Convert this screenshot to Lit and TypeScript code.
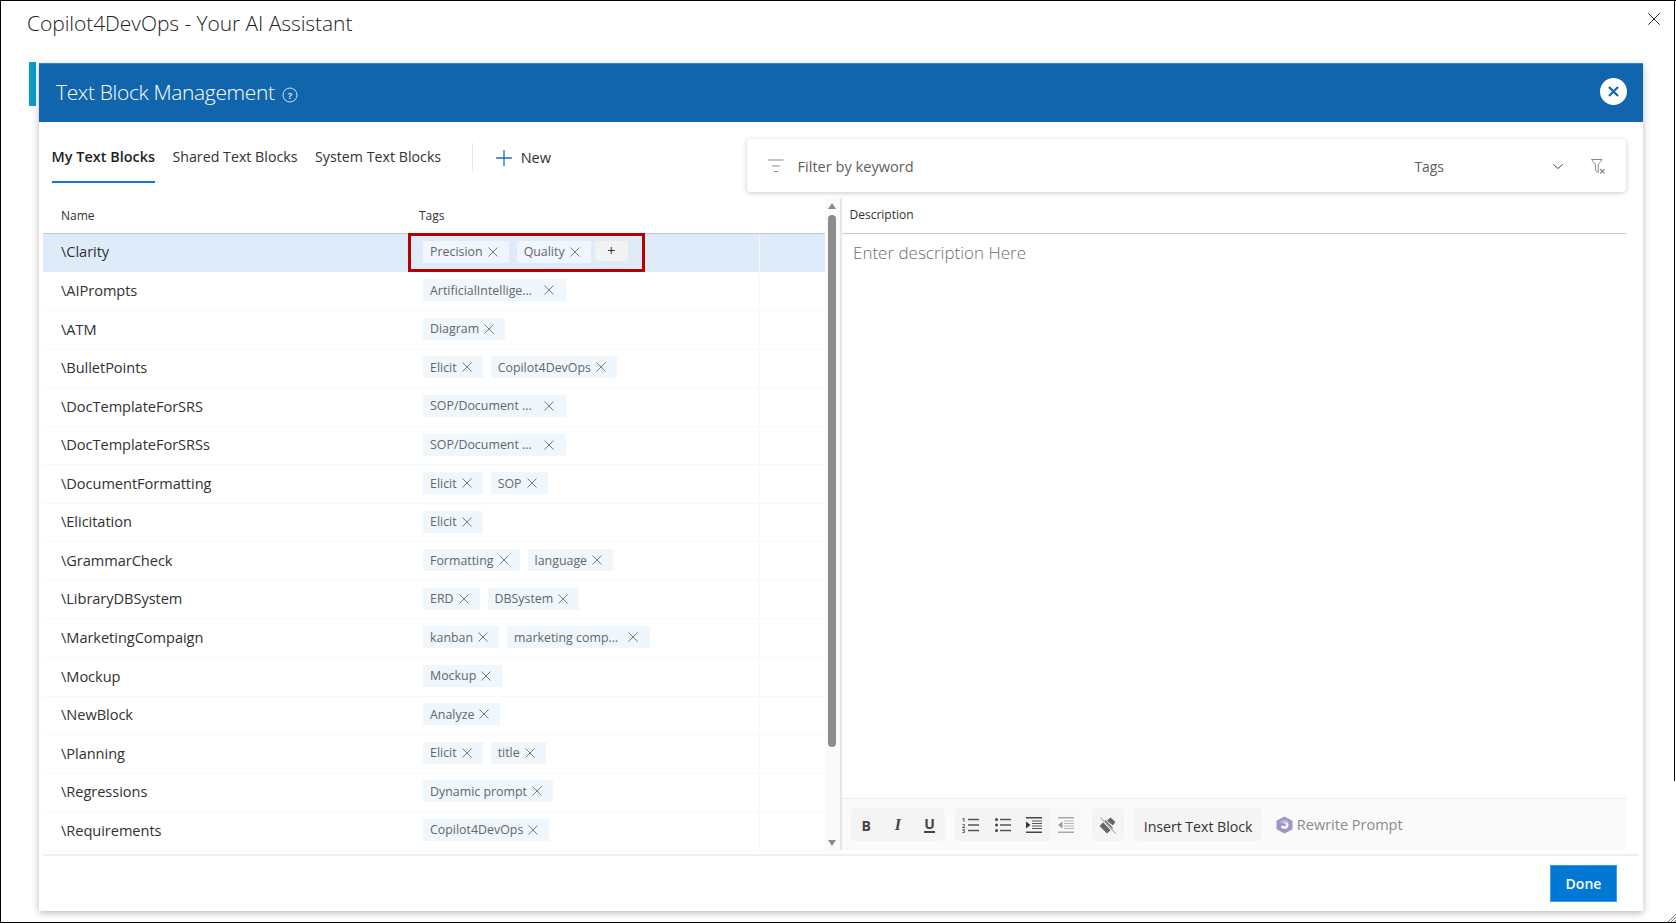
import { LitElement, html, css, nothing } from 'lit';
import { customElement } from 'lit/decorators.js';

interface Tag {
  label: string;
  cut?: boolean;
}

interface Block {
  name: string;
  tags: Tag[];
}

const t = (label: string, cut = false): Tag => ({ label, cut });

const BLOCKS: Block[] = [
  { name: '\\Clarity', tags: [t('Precision'), t('Quality')] },
  { name: '\\AIPrompts', tags: [t('ArtificialIntellige...', true)] },
  { name: '\\ATM', tags: [t('Diagram')] },
  { name: '\\BulletPoints', tags: [t('Elicit'), t('Copilot4DevOps')] },
  { name: '\\DocTemplateForSRS', tags: [t('SOP/Document ...', true)] },
  { name: '\\DocTemplateForSRSs', tags: [t('SOP/Document ...', true)] },
  { name: '\\DocumentFormatting', tags: [t('Elicit'), t('SOP')] },
  { name: '\\Elicitation', tags: [t('Elicit')] },
  { name: '\\GrammarCheck', tags: [t('Formatting'), t('language')] },
  { name: '\\LibraryDBSystem', tags: [t('ERD'), t('DBSystem')] },
  { name: '\\MarketingCompaign', tags: [t('kanban'), t('marketing comp...', true)] },
  { name: '\\Mockup', tags: [t('Mockup')] },
  { name: '\\NewBlock', tags: [t('Analyze')] },
  { name: '\\Planning', tags: [t('Elicit'), t('title')] },
  { name: '\\Regressions', tags: [t('Dynamic prompt')] },
  { name: '\\Requirements', tags: [t('Copilot4DevOps')] },
];

const crossIcon = html`<svg class="x" width="10" height="10" viewBox="0 0 10 10"><path d="M.5.5l9 9M9.5.5l-9 9" stroke="#7a7a7a" fill="none"/></svg>`;

@customElement('app-root')
export class AppRoot extends LitElement {
  static override styles = css`
    :host {
      display: block;
      width: 1676px;
      height: 923px;
      font-family: 'Open Sans', 'Noto Sans', sans-serif;
      color: #323130;
    }

    * {
      box-sizing: border-box;
    }

    .frame {
      position: relative;
      height: 923px;
      background: #fff;
      border-top: 1px solid #000;
      border-left: 1px solid #000;
      border-bottom: 1px solid #000;
      overflow: hidden;
    }

    .frame::after {
      content: '';
      position: absolute;
      top: 0;
      left: 1673px;
      width: 1px;
      height: 780px;
      background: #000;
    }

    .titlebar {
      height: 62px;
      padding: 7px 16px 0 26px;
      display: flex;
      justify-content: space-between;
      align-items: flex-start;
    }

    .app-title {
      font-size: 21px;
      font-weight: 300;
      line-height: 30px;
      letter-spacing: -0.07px;
      color: #222;
    }

    .app-close {
      margin-top: 5px;
    }

    .stage {
      position: relative;
      margin-left: 37.5px;
      width: 1604.5px;
      height: 848px;
    }

    .strip {
      position: absolute;
      left: -10px;
      top: -1px;
      width: 7.5px;
      height: 44px;
      background: #0a9bc9;
    }

    .modal {
      position: relative;
      height: 100%;
      display: flex;
      flex-direction: column;
      background: #fff;
      box-shadow: 0 2px 7px rgba(0, 0, 0, 0.28);
    }

    .head {
      flex: 0 0 59px;
      background: #1165ac;
      border-top: 1px solid #3d83bd;
      padding: 0 16px 0 17.5px;
      display: flex;
      align-items: center;
      color: #fff;
    }

    .head-title {
      font-size: 21px;
      font-weight: 300;
      letter-spacing: -0.35px;
      line-height: 30px;
      margin-top: -3px;
    }

    .help {
      margin-left: 7px;
      margin-top: 3px;
    }

    .head-close {
      margin-left: auto;
      width: 27px;
      height: 27px;
      border-radius: 50%;
      background: #fff;
      display: flex;
      align-items: center;
      justify-content: center;
      margin-top: -3px;
    }

    .top {
      flex: 0 0 76px;
      display: flex;
      justify-content: space-between;
      padding: 16px 17.5px 0 13px;
    }

    .tabs {
      display: flex;
      align-items: flex-start;
    }

    .tab {
      height: 45px;
      margin-right: 17.5px;
      padding-top: 8px;
      font-size: 14.2px;
      line-height: 22px;
      letter-spacing: 0.02px;
      color: #323130;
    }

    .tab.active {
      font-weight: 600;
      font-size: 14.4px;
      letter-spacing: 0.02px;
      color: #1f1f1f;
      border-bottom: 2px solid #0f78d4;
    }

    .sep {
      width: 1px;
      height: 28px;
      margin: 5px 0 0 13px;
      background: #e6e6e6;
    }

    .new {
      display: flex;
      align-items: center;
      height: 22px;
      margin: 8px 0 0 23px;
      font-size: 14.5px;
    }

    .new svg {
      margin-right: 9px;
      margin-top: 1px;
    }

    .filter {
      width: 879px;
      height: 53px;
      margin-top: 1px;
      background: #fff;
      border-radius: 4px;
      box-shadow: 0 1px 5px rgba(0, 0, 0, 0.22);
      display: flex;
      align-items: center;
      padding: 1px 20px 0 21px;
      font-size: 14.6px;
      color: #605e5c;
    }

    .filter-text {
      margin-left: 14px;
    }

    .filter-tags {
      margin-left: auto;
      width: 138px;
      font-size: 14px;
      letter-spacing: -0.1px;
    }

    .filter .clear {
      margin-left: 28px;
    }

    .panes {
      flex: 1;
      min-height: 0;
      display: flex;
      padding: 0 17.5px 0 4.5px;
    }

    .list {
      flex: 0 0 782px;
      overflow: hidden;
    }

    .list-head {
      height: 36px;
      display: grid;
      grid-template-columns: 365px 1fr;
      align-items: center;
      font-size: 12px;
      color: #323130;
      border-bottom: 1px solid #c8c8c8;
    }

    .list-head span:first-child {
      padding-left: 18px;
    }

    .list-head span:last-child {
      padding-left: 11px;
    }

    .row {
      position: relative;
      height: 38.55px;
      display: grid;
      grid-template-columns: 365px 351px 1fr;
      align-items: center;
      border-bottom: 1px solid #f8f8f8;
    }

    .row.selected {
      height: 37.55px;
      margin-bottom: 1px;
      background: #deebf8;
      border-bottom-color: transparent;
    }

    .name {
      margin-bottom: 2.5px;
      padding-left: 18px;
      font-size: 14.6px;
      letter-spacing: -0.05px;
      color: #323130;
    }

    .cell {
      display: flex;
      gap: 8px;
      margin-bottom: 2px;
      padding-left: 15px;
      align-items: flex-start;
    }

    .selected .cell {
      margin-bottom: 1px;
    }

    .chip {
      height: 22px;
      display: flex;
      align-items: center;
      gap: 5px;
      padding: 0 11px 0 7px;
      background: #eff6fc;
      font-size: 12.4px;
      color: #666;
      white-space: nowrap;
    }

    .chip.cut {
      width: 142.7px;
      padding-right: 12px;
      justify-content: space-between;
    }

    .add {
      width: 33px;
      height: 20px;
      margin-left: -4px;
      border-radius: 3px;
      background: #f2f2f2;
      display: flex;
      align-items: center;
      justify-content: center;
      font-size: 14px;
      color: #333;
    }

    .marker {
      position: absolute;
      left: 365px;
      top: -1px;
      width: 237px;
      height: 39px;
      border: 3px solid #b80000;
      pointer-events: none;
    }

    .cell-end {
      align-self: stretch;
      border-left: 1px solid #f8f8f8;
    }

    .scroll {
      flex: 0 0 14.5px;
      background: #fafafa;
      display: flex;
      flex-direction: column;
      align-items: center;
    }

    .arrow-up {
      margin-top: 5px;
      width: 0;
      height: 0;
      border-left: 4px solid transparent;
      border-right: 4px solid transparent;
      border-bottom: 6px solid #8c8c8c;
    }

    .thumb {
      margin-top: 6px;
      width: 8px;
      height: 532px;
      border-radius: 4px;
      background: #8c8c8c;
    }

    .arrow-down {
      margin-top: 93px;
      width: 0;
      height: 0;
      border-left: 4px solid transparent;
      border-right: 4px solid transparent;
      border-top: 6px solid #8c8c8c;
    }

    .detail {
      flex: 1;
      min-width: 0;
      border-left: 2px solid #e6e6e6;
      display: flex;
      flex-direction: column;
      height: 652px;
    }

    .detail-head {
      flex: 0 0 36px;
      padding: 8px 0 0 8px;
      font-size: 12px;
      line-height: 18px;
      border-bottom: 1px solid #c8c8c8;
    }

    .editor {
      flex: 1;
      padding: 7px 0 0 11.5px;
      font-size: 17px;
      font-weight: 300;
      line-height: 24px;
      color: #6e6e6e;
    }

    .toolbar {
      flex: 0 0 52px;
      background: #fafafa;
      border-top: 1px solid #eee;
      display: flex;
      align-items: center;
      gap: 10px;
      padding: 0 0 0 9px;
    }

    .group {
      height: 33px;
      border-radius: 5px;
      background: #f4f4f4;
      display: flex;
      align-items: center;
      overflow: hidden;
    }

    .tool {
      width: 31.6px;
      height: 100%;
      padding-top: 1px;
      display: flex;
      align-items: center;
      justify-content: center;
      color: #444;
      font-size: 14px;
      font-weight: 700;
    }

    .tool.off {
      background: #f8f8f8;
    }

    .tool.i {
      font-family: 'Liberation Serif', serif;
      font-style: italic;
      font-size: 16px;
    }

    .tool.u span {
      line-height: 14px;
      border-bottom: 2px solid #444;
    }

    .tool.wide {
      width: 32.6px;
    }

    .insert {
      padding: 3px 9.5px 0;
      font-size: 14.2px;
      letter-spacing: -0.05px;
      color: #333;
      font-weight: 400;
    }

    .rewrite {
      display: flex;
      align-items: center;
      gap: 4px;
      margin-left: 4px;
      font-size: 14.5px;
      color: #8a8a8a;
    }

    .foot {
      flex: 0 0 57px;
      display: flex;
      justify-content: flex-end;
      align-items: flex-start;
      margin: 0 4.5px;
      padding: 9px 21.5px 0 0;
      border-top: 2px solid #efefef;
    }

    .done {
      width: 67px;
      height: 37px;
      border: 1px solid #3f9ae6;
      background: #0078d4;
      color: #fff;
      font-family: inherit;
      font-size: 14px;
      font-weight: 600;
    }

    .grip {
      position: absolute;
      right: 0;
      bottom: 0;
    }
  `;

  private renderTag(tag: Tag) {
    return html`<span class="chip ${tag.cut ? 'cut' : ''}">${tag.label}${crossIcon}</span>`;
  }

  private renderRow(block: Block, index: number) {
    const selected = index === 0;
    return html`
      <div class="row ${selected ? 'selected' : ''}">
        <div class="name">${block.name}</div>
        <div class="cell">
          ${block.tags.map((tag) => this.renderTag(tag))}
          ${selected ? html`<span class="add">+</span>` : nothing}
        </div>
        <div class="cell-end"></div>
        ${selected ? html`<div class="marker"></div>` : nothing}
      </div>
    `;
  }

  private renderToolbar() {
    return html`
      <div class="toolbar">
        <div class="group">
          <div class="tool">B</div>
          <div class="tool i">I</div>
          <div class="tool u"><span>U</span></div>
        </div>
        <div class="group">
          <div class="tool">
            <svg width="18" height="17" viewBox="0 0 18 17">
              <text x="0" y="5" font-size="5.5" font-weight="700" fill="#444" font-family="Open Sans">1</text>
              <text x="0" y="10.5" font-size="5.5" font-weight="700" fill="#444" font-family="Open Sans">2</text>
              <text x="0" y="16" font-size="5.5" font-weight="700" fill="#444" font-family="Open Sans">3</text>
              <path d="M6 2.500h11M6 8h11M6 13.500h11" stroke="#555" stroke-width="1.300"/>
            </svg>
          </div>
          <div class="tool">
            <svg width="16" height="16" viewBox="0 0 16 16">
              <circle cx="1.500" cy="2.500" r="1.500" fill="#444"/>
              <circle cx="1.500" cy="8" r="1.500" fill="#444"/>
              <circle cx="1.500" cy="13.500" r="1.500" fill="#444"/>
              <path d="M5 2.500h11M5 8h11M5 13.500h11" stroke="#555" stroke-width="1.300"/>
            </svg>
          </div>
          <div class="tool">
            <svg width="16" height="16" viewBox="0 0 16 16">
              <path d="M0 .75h16M0 15.250h16" stroke="#444" stroke-width="1.500"/>
              <path d="M6 4h10M6 6.500h10M6 9h10M6 11.500h10" stroke="#555" stroke-width="1.200"/>
              <path d="M0 4.500l4.500 3.500-4.500 3.500z" fill="#333"/>
            </svg>
          </div>
          <div class="tool off">
            <svg width="16" height="16" viewBox="0 0 16 16">
              <path d="M0 .75h16M0 15.250h16" stroke="#aaa" stroke-width="1.500"/>
              <path d="M6 4h10M6 6.500h10M6 9h10M6 11.500h10" stroke="#b5b5b5" stroke-width="1.200"/>
              <path d="M4.500 4.500l-4.500 3.500 4.500 3.500z" fill="#999"/>
            </svg>
          </div>
        </div>
        <div class="group">
          <div class="tool wide">
            <svg width="17" height="17" viewBox="0 0 17 17">
              <path d="M.5 9l6-6 7.500 8-6 5.500z" fill="#666"/>
              <path d="M8 3.500l3.500-3 5 4.500-2.800 3.500z" fill="#666"/>
              <path d="M1 .5l15 16" stroke="#f4f4f4" stroke-width="2"/>
              <path d="M1.500 .5l15 16" stroke="#777" stroke-width=".8"/>
            </svg>
          </div>
        </div>
        <div class="group"><div class="insert">Insert Text Block</div></div>
        <div class="rewrite">
          <svg width="17" height="18" viewBox="0 0 17 18">
            <path d="M8.500 .5l8 4.200v8.600l-8 4.200-8-4.200V4.700z" fill="#9c98c6"/>
            <path d="M8.500 5a4 4 0 1 1-3.800 5.200l2.600-.8a1.400 1.400 0 1 0 .4-1.600z" fill="#fafafa"/>
            <path d="M3.500 6.500l5-3 4.500 2.500-2.500 1-2-1-2.500 1.500z" fill="#bdb9dc"/>
          </svg>
          Rewrite Prompt
        </div>
      </div>
    `;
  }

  override render() {
    return html`
      <div class="frame">
        <div class="titlebar">
          <div class="app-title">Copilot4DevOps - Your AI Assistant</div>
          <svg class="app-close" width="12" height="12" viewBox="0 0 12 12"><path d="M.3.3l11.400 11.400M11.700.3L.3 11.700" stroke="#333" fill="none"/></svg>
        </div>
        <div class="stage">
          <div class="strip"></div>
          <div class="modal">
            <div class="head">
              <span class="head-title">Text Block Management</span>
              <svg class="help" width="16" height="16" viewBox="0 0 16 16">
                <circle cx="8" cy="8" r="7" fill="none" stroke="#d5e4f1" stroke-width="1"/>
                <text x="8" y="11.500" text-anchor="middle" font-size="9.500" font-weight="700" fill="#d5e4f1" font-family="Open Sans">?</text>
              </svg>
              <div class="head-close">
                <svg width="11" height="11" viewBox="0 0 11 11"><path d="M1 1l9 9M10 1l-9 9" stroke="#1165ac" stroke-width="2.200" fill="none"/></svg>
              </div>
            </div>
            <div class="top">
              <div class="tabs">
                <div class="tab active">My Text Blocks</div>
                <div class="tab">Shared Text Blocks</div>
                <div class="tab">System Text Blocks</div>
                <div class="sep"></div>
                <div class="new">
                  <svg width="16" height="16" viewBox="0 0 16 16"><path d="M8 0v16M0 8h16" stroke="#1a73c0" stroke-width="1.300" fill="none"/></svg>
                  New
                </div>
              </div>
              <div class="filter">
                <svg width="16" height="14" viewBox="0 0 16 14"><path d="M0 1h15.500M4 7h8M6 12.500h4" stroke="#8a8a8a" stroke-width="1.200" fill="none"/></svg>
                <span class="filter-text">Filter by keyword</span>
                <span class="filter-tags">Tags</span>
                <svg width="10" height="5" viewBox="0 0 10 5"><path d="M.5.5l4.500 4 4.500-4" stroke="#444" fill="none"/></svg>
                <svg class="clear" width="15" height="15" viewBox="0 0 15 15">
                  <path d="M.5.5h10.500l-3.800 5v8l-2.800-2.200v-5.800z" stroke="#8a8a8a" fill="none"/>
                  <path d="M9 10l4.500 4.500M13.500 10l-4.500 4.500" stroke="#8a8a8a" stroke-width="1.200" fill="none"/>
                </svg>
              </div>
            </div>
            <div class="panes">
              <div class="list">
                <div class="list-head"><span>Name</span><span>Tags</span></div>
                ${BLOCKS.map((block, i) => this.renderRow(block, i))}
              </div>
              <div class="scroll">
                <div class="arrow-up"></div>
                <div class="thumb"></div>
                <div class="arrow-down"></div>
              </div>
              <div class="detail">
                <div class="detail-head">Description</div>
                <div class="editor">Enter description Here</div>
                ${this.renderToolbar()}
              </div>
            </div>
            <div class="foot"><button class="done">Done</button></div>
          </div>
        </div>
        <svg class="grip" width="8" height="9" viewBox="0 0 8 9"><path d="M0 9l8-8M3 9l5-5M6 9l2-2" stroke="#777" fill="none"/></svg>
      </div>
    `;
  }
}
